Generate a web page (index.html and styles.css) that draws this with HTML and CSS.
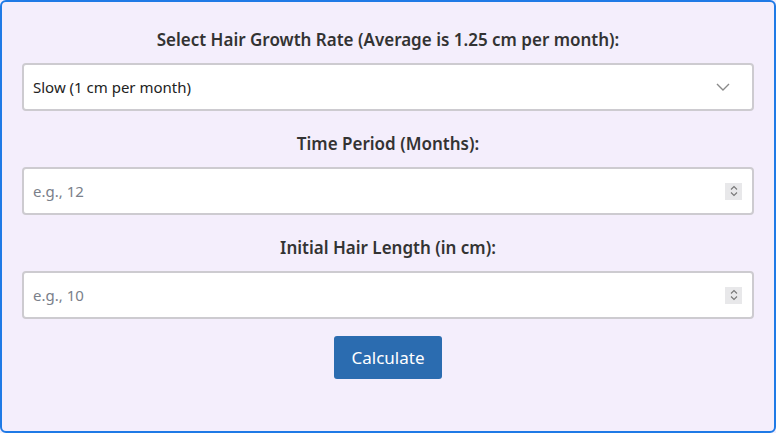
FILE: index.html
```html
<!DOCTYPE html>
<html>
<head>
    <title>Hair Growth Calculator</title>
    <link rel="stylesheet" href="styles.css">
</head>
<body>
    <div class="calculator">
        <label class="field-label" for="growth-rate">Select Hair Growth Rate (Average is 1.25 cm per month):</label>
        <div class="field-box">
            <select id="growth-rate" class="field-input">
                <option value="1">Slow (1 cm per month)</option>
                <option value="1.25">Average (1.25 cm per month)</option>
                <option value="1.5">Fast (1.5 cm per month)</option>
            </select>
            <svg class="chevron" width="14" height="8" viewBox="0 0 14 8">
                <path d="M1 1l6 6 6-6" fill="none" stroke="#8a8a8a" stroke-width="1.4"/>
            </svg>
        </div>

        <label class="field-label" for="months">Time Period (Months):</label>
        <div class="field-box">
            <input type="number" id="months" class="field-input" placeholder="e.g., 12">
            <span class="spinner">
                <svg width="10" height="14" viewBox="0 0 10 14">
                    <path d="M2 5.5l3-3 3 3M2 8.5l3 3 3-3" fill="none" stroke="#777" stroke-width="1.1"/>
                </svg>
            </span>
        </div>

        <label class="field-label" for="initial-length">Initial Hair Length (in cm):</label>
        <div class="field-box">
            <input type="number" id="initial-length" class="field-input" placeholder="e.g., 10">
            <span class="spinner">
                <svg width="10" height="14" viewBox="0 0 10 14">
                    <path d="M2 5.5l3-3 3 3M2 8.5l3 3 3-3" fill="none" stroke="#777" stroke-width="1.1"/>
                </svg>
            </span>
        </div>

        <button class="calculate-button">Calculate</button>
    </div>
</body>
</html>
```

FILE: styles.css
```css
html, body {
    margin: 0;
    padding: 0;
}
body {
    font-family: "Noto Sans", "Open Sans", sans-serif;
    background-color: #f4eefc;
}
.calculator {
    box-sizing: border-box;
    width: 776px;
    height: 433px;
    border: 2px solid #1f7ae6;
    border-radius: 6px;
    background-color: #f4eefc;
    padding: 26px 20px 20px 20px;
    display: flex;
    flex-direction: column;
    align-items: stretch;
}
.field-label {
    display: block;
    text-align: center;
    font-size: 17px;
    font-weight: 600;
    line-height: 24px;
    color: #333;
    margin-bottom: 11px;
}
.field-box {
    box-sizing: border-box;
    height: 48px;
    display: flex;
    align-items: center;
    background-color: #fff;
    border: 2px solid #cdcbd0;
    border-radius: 4px;
    margin-bottom: 21px;
    padding-right: 10px;
}
.field-input {
    flex: 1;
    height: 100%;
    border: none;
    outline: none;
    background: transparent;
    padding: 0 0 0 9px;
    font-family: inherit;
    font-size: 15px;
    color: #222;
    -webkit-appearance: none;
    appearance: none;
    -moz-appearance: textfield;
}
.field-input::placeholder {
    color: #7a808a;
}
.field-input::-webkit-inner-spin-button,
.field-input::-webkit-outer-spin-button {
    -webkit-appearance: none;
    margin: 0;
}
.chevron {
    margin-right: 12px;
}
.spinner {
    width: 17px;
    height: 17px;
    background-color: #e8e8ea;
    display: flex;
    align-items: center;
    justify-content: center;
}
.calculate-button {
    align-self: center;
    width: 108px;
    height: 43px;
    margin-top: -4px;
    background-color: #2b6cb0;
    color: #fff;
    border: none;
    border-radius: 3px;
    font-family: inherit;
    font-size: 17px;
    cursor: pointer;
}
```
